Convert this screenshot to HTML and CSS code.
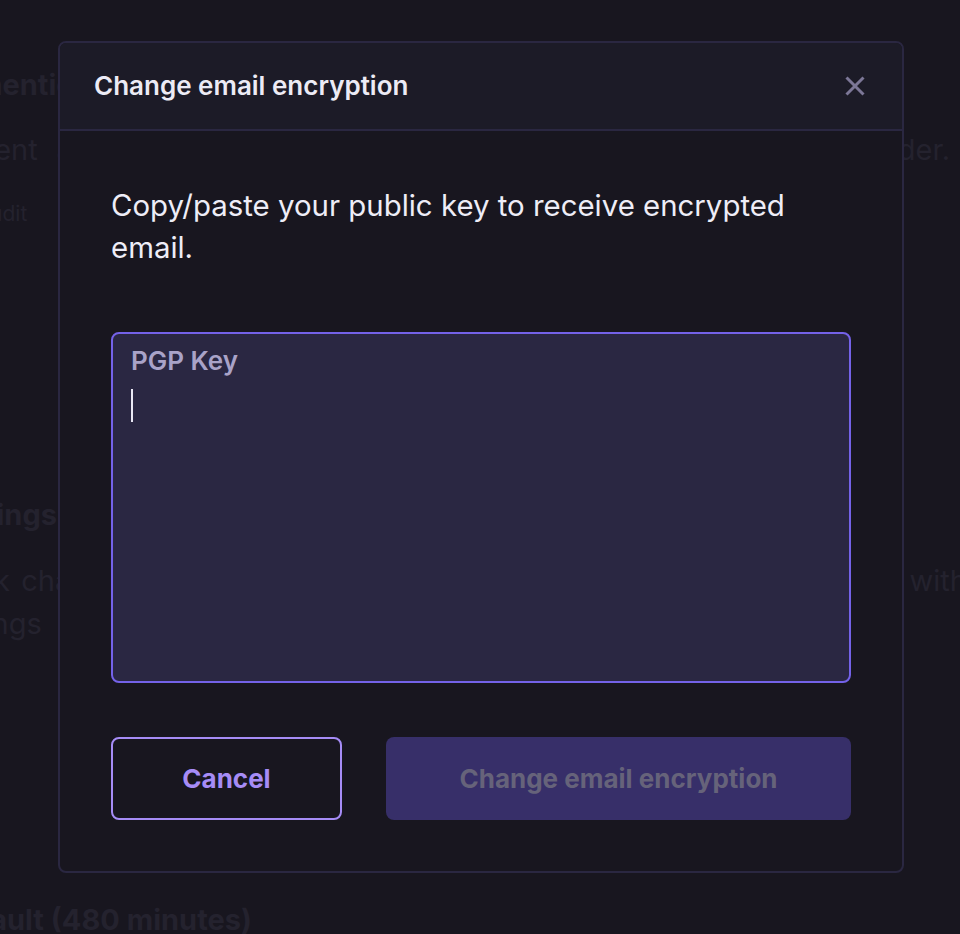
FILE: index.html
```html
<!DOCTYPE html>
<html lang="en">
<head>
<meta charset="utf-8">
<title>Change email encryption</title>
<link rel="stylesheet" href="styles.css">
</head>
<body>
<main class="page">
  <section class="section">
    <h2 class="section-title">Authentication</h2>
    <p class="section-text justify">Current agent sessions are managed through your sign-on provider.</p>
    <a class="section-link">Run audit</a>
  </section>
  <section class="section section-session">
    <h2 class="section-title">Settings</h2>
    <p class="section-text justify wide">Block changes to the session timeout for all new agents who sign in with</p>
    <p class="section-text">settings</p>
    <p class="section-value">Default (480 minutes)</p>
  </section>
</main>

<div class="backdrop">
  <div class="modal" role="dialog" aria-labelledby="modal-title">
    <header class="modal-header">
      <h1 class="modal-title" id="modal-title">Change email encryption</h1>
      <button class="close" aria-label="Close">
        <svg viewBox="0 0 24 24" width="24" height="24"><path d="M3.5 3.5 L20.5 20.5 M20.5 3.5 L3.5 20.5" stroke="currentColor" stroke-width="3" fill="none"/></svg>
      </button>
    </header>
    <div class="modal-body">
      <p class="intro">Copy/paste your public key to receive encrypted email.</p>
      <label class="field">
        <span class="field-label">PGP Key</span>
        <span class="caret"></span>
      </label>
      <div class="actions">
        <button class="btn btn-secondary">Cancel</button>
        <button class="btn btn-primary" disabled>Change email encryption</button>
      </div>
    </div>
  </div>
</div>
</body>
</html>
```

FILE: styles.css
```css
* { box-sizing: border-box; }
html, body { margin: 0; padding: 0; }
body {
  width: 960px;
  height: 934px;
  overflow: hidden;
  background: #18161f;
  font-family: Inter, "Noto Sans", sans-serif;
  position: relative;
}

/* background page (dimmed) */
.page {
  margin-left: -66px;
  padding-top: 65px;
  color: #24222e;
}
.section-title {
  margin: 0;
  font-size: 29px;
  font-weight: 700;
  line-height: 40px;
}
.section-text {
  margin: 0;
  font-size: 29px;
  line-height: 43px;
  white-space: nowrap;
}
.section-title + .section-text { margin-top: 23px; }
.justify {
  width: 1016px;
  text-align: justify;
  text-align-last: justify;
  white-space: normal;
}
.justify.wide { width: 1033px; }
.section-link {
  display: block;
  margin-top: 29px;
  font-size: 21px;
  line-height: 28px;
}
.section-session { margin-top: 267px; }
.section-session .section-title { margin-left: 6px; }
.section-session .section-title + .section-text { margin-top: 24px; }
.section-value {
  margin: 255px 0 0 7px;
  font-size: 29px;
  font-weight: 700;
  line-height: 40px;
}

/* modal */
.backdrop {
  position: absolute;
  inset: 0;
}
.modal {
  position: absolute;
  left: 58px;
  top: 41px;
  width: 846px;
  height: 832px;
  background: #18161f;
  border: 2px solid #2a2741;
  border-radius: 8px;
  overflow: hidden;
  display: flex;
  flex-direction: column;
}
.modal-header {
  height: 88px;
  flex: none;
  background: #1c1b27;
  border-bottom: 2px solid #2a2741;
  display: flex;
  align-items: center;
  justify-content: space-between;
  padding: 0 35px 0 34px;
}
.modal-title {
  margin: 0;
  font-size: 26px;
  font-weight: 600;
  line-height: 32px;
  color: #ecebf5;
}
.close {
  background: none;
  border: 0;
  padding: 0;
  width: 24px;
  height: 24px;
  color: #7c7797;
  display: flex;
}
.modal-body {
  padding: 54px 51px 54px;
  display: flex;
  flex-direction: column;
}
.intro {
  margin: 0;
  font-size: 29.4px;
  line-height: 42px;
  color: #eeedf7;
}
.field {
  margin-top: 63px;
  height: 351px;
  background: #2a2742;
  border: 2px solid #7462e8;
  border-radius: 8px;
  padding: 12px 18px;
  display: flex;
  flex-direction: column;
  align-items: flex-start;
}
.field-label {
  font-size: 26px;
  font-weight: 600;
  line-height: 30px;
  color: #a9a3c8;
}
.caret {
  margin-top: 13px;
  width: 2px;
  height: 33px;
  background: #e9e7f4;
}
.actions {
  margin-top: 54px;
  display: flex;
  gap: 44px;
}
.btn {
  height: 83px;
  border-radius: 8px;
  font-family: inherit;
  font-size: 26px;
  font-weight: 700;
}
.btn-secondary {
  width: 231px;
  background: transparent;
  border: 2px solid #a68cf6;
  color: #a68cf6;
}
.btn-primary {
  flex: 1;
  background: #372f69;
  border: 0;
  color: #66637a;
}
```
